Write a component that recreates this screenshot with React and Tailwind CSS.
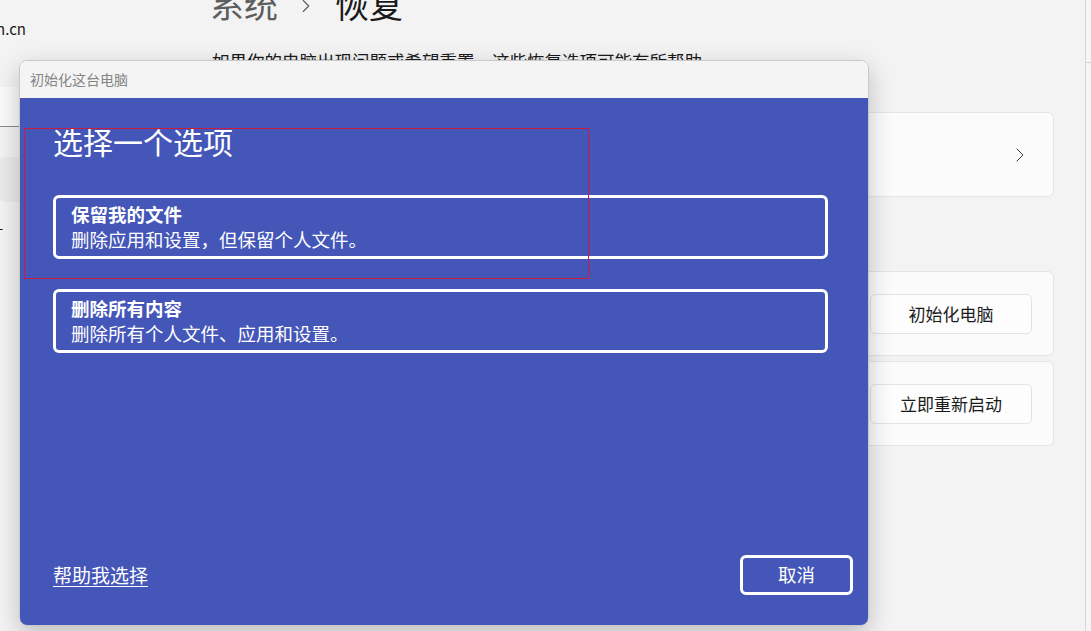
import { ChevronRight } from 'lucide-react'

const FONT = "font-['Noto_Sans_CJK_SC','Noto_Sans',sans-serif]"

function OptionCard({ title, desc }) {
  return (
    <button className="w-[775px] text-left rounded-[6px] border-[3px] border-white pl-[15px] pt-[4px] pb-[4px] text-white">
      <div className="text-[18.5px] leading-[25px] font-bold">{title}</div>
      <div className="text-[18.5px] leading-[25px]">{desc}</div>
    </button>
  )
}

// the left part of these cards sits under the dialog, so only the right end is drawn
function SettingCard({ children, className = '' }) {
  return (
    <div className={`h-[85px] rounded-[6px] border border-[#e5e5e5] bg-[#fbfbfb] flex items-center justify-end pl-[20px] pr-[21px] ${className}`}>
      {children}
    </div>
  )
}

export default function App() {
  return (
    <div className={`relative w-[1091px] h-[631px] overflow-hidden bg-[#f3f3f3] text-[#1a1a1a] ${FONT}`}>
      <div className="flex h-full">
        {/* sidebar, scrolled so only its right part shows */}
        <aside className="w-[210px] shrink-0">
          <div className="mt-[19px] ml-[-4px] text-[15px] leading-[20px] text-[#1b1b1b]">n.cn</div>
          <div className="mt-[48px] mr-[10px] h-[40px] bg-[#fafafa] border-b border-[#8b8b8b]" />
          <div className="mt-[30px] mr-[10px] h-[45px] bg-[#eaeaea] rounded-[4px]" />
          <div className="mt-[16px] ml-[-2px] text-[15px] leading-[20px]">-</div>
        </aside>

        {/* settings page behind the dialog */}
        <main className="w-[844px] shrink-0">
          <div className="mt-[-17px] flex items-center text-[34px] leading-[41px]">
            <span className="text-[#5d5d5d]">系统</span>
            <ChevronRight className="w-[22px] h-[22px] ml-[17px] mr-[18px] text-[#5d5d5d] mt-[4px]" strokeWidth={1.2} />
            <span className="text-[#1a1a1a]">恢复</span>
          </div>
          <p className="mt-[25px] ml-[2px] text-[17.5px] leading-[24px]">
            如果你的电脑出现问题或希望重置，这些恢复选项可能有所帮助。
          </p>
          <SettingCard className="mt-[39px]">
            <ChevronRight className="w-[24px] h-[24px] text-[#3a3a3a]" strokeWidth={1} />
          </SettingCard>
          <div className="mt-[74px]" />
          <SettingCard>
            <button className="w-[162px] h-[40px] rounded-[5px] border border-[#e3e3e3] bg-[#fdfdfd] text-[17px] text-[#1a1a1a]">
              初始化电脑
            </button>
          </SettingCard>
          <SettingCard className="mt-[5px]">
            <button className="w-[162px] h-[40px] rounded-[5px] border border-[#e3e3e3] bg-[#fdfdfd] text-[17px] text-[#1a1a1a]">
              立即重新启动
            </button>
          </SettingCard>
        </main>

        <div className="w-[31px] shrink-0" />
        <div className="flex-1 border-l border-[#d6d6d6] bg-[#f5f5f5]">
          <div className="mt-[62px] border-t border-[#d6d6d6]" />
        </div>
      </div>

      {/* 初始化这台电脑 dialog */}
      <div className="absolute left-[19px] top-[60px] w-[850px] h-[566px] rounded-[8px] overflow-hidden flex flex-col border border-[#c9c9c9] shadow-[0_8px_24px_rgba(0,0,0,0.22)]">
        <div className="h-[37px] shrink-0 bg-[#f4f4f4] flex items-center pl-[10px] text-[14px] text-[#858585]">
          初始化这台电脑
        </div>
        <div className="flex-1 bg-[#4456b7] flex flex-col pl-[33px] text-white">
          <h1 className="mt-[25px] text-[30px] leading-[36px] font-normal">选择一个选项</h1>
          <div className="mt-[36px] flex flex-col gap-[30px]">
            <OptionCard title="保留我的文件" desc="删除应用和设置，但保留个人文件。" />
            <OptionCard title="删除所有内容" desc="删除所有个人文件、应用和设置。" />
          </div>
          <div className="flex-1" />
          <div className="flex items-center justify-between pr-[15px] pb-[30px]">
            <a className="text-[19px] leading-[24px] underline underline-offset-[3px] decoration-1 cursor-pointer">帮助我选择</a>
            <button className="w-[113px] h-[40px] rounded-[6px] border-[3px] border-white text-[18.5px] text-white">
              取消
            </button>
          </div>
        </div>
      </div>

      {/* red annotation frame */}
      <div className="absolute left-[24px] top-[128px] w-[565px] h-[151px] border border-[#c81d3f] pointer-events-none" />
    </div>
  )
}
